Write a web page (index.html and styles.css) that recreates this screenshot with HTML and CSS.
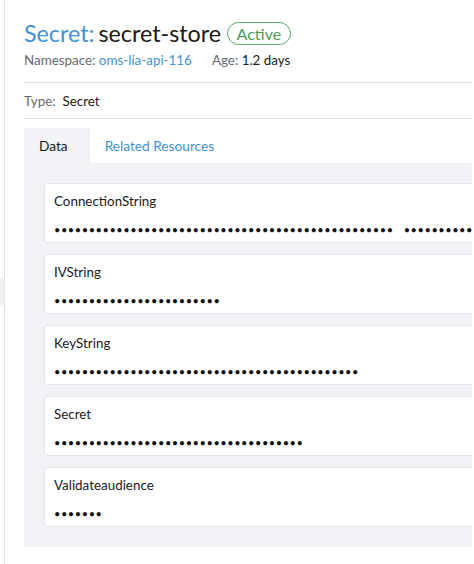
FILE: index.html
```html
<!DOCTYPE html>
<html>
<head>
<meta charset="utf-8">
<link rel="stylesheet" href="styles.css">
</head>
<body>
<div class="layout">
  <div class="rail"><div class="rail-block"></div></div>
  <div class="main">
    <div class="clip">
      <div class="title-row">
        <span class="kind">Secret:</span>
        <span class="name">secret-store</span>
        <span class="badge">Active</span>
      </div>
      <div class="meta">
        <span class="meta-item"><span class="meta-label">Namespace:</span> <span class="link">oms-lia-api-116</span></span>
        <span class="meta-item"><span class="meta-label">Age:</span> <span class="meta-value">1.2 days</span></span>
      </div>
      <div class="type-row"><span class="meta-label">Type:</span>&nbsp; <span class="meta-value">Secret</span></div>
      <div class="tabs">
        <div class="tab active">Data</div>
        <div class="tab">Related Resources</div>
      </div>
      <div class="panel">
        <div class="card">
          <div class="card-label">ConnectionString</div>
          <div class="dots">•••••••••••••••••••••••••••••••••••••••••••••••••&nbsp;&nbsp;&nbsp;•••••••••••••••••••••••••</div>
        </div>
        <div class="card">
          <div class="card-label">IVString</div>
          <div class="dots">••••••••••••••••••••••••</div>
        </div>
        <div class="card">
          <div class="card-label">KeyString</div>
          <div class="dots">••••••••••••••••••••••••••••••••••••••••••••</div>
        </div>
        <div class="card">
          <div class="card-label">Secret</div>
          <div class="dots">••••••••••••••••••••••••••••••••••••</div>
        </div>
        <div class="card">
          <div class="card-label">Validateaudience</div>
          <div class="dots">•••••••</div>
        </div>
      </div>
    </div>
  </div>
</div>
</body>
</html>
```

FILE: styles.css
```css
html, body {
  margin: 0;
  padding: 0;
  background: #ffffff;
  overflow: hidden;
}
body {
  font-family: Lato, "Open Sans", sans-serif;
  color: #1f1f1f;
}
.layout {
  display: flex;
  height: 564px;
}
.rail {
  width: 4px;
  flex: none;
}
.rail-block {
  margin-top: 278px;
  height: 27px;
  background: #eef0f3;
}
.main {
  flex: 1;
  border-left: 1px solid #e3e3e3;
  padding: 0 2px 0 19px;
  min-width: 0;
}
.clip {
  overflow: hidden;
  height: 564px;
}
.title-row {
  display: flex;
  align-items: center;
  padding-top: 18px;
  height: 30px;
  font-size: 23.3px;
  line-height: 30px;
  white-space: nowrap;
}
.kind {
  color: #3f93d3;
}
.name {
  color: #1a1a1a;
  margin-left: 4px;
}
.badge {
  margin-left: 6px;
  border: 1px solid #5ea86b;
  color: #4b9b59;
  border-radius: 12px;
  font-size: 16px;
  line-height: 21px;
  padding: 0 8.5px;
}
.meta {
  display: flex;
  gap: 20px;
  font-size: 13.4px;
  line-height: 18px;
  margin-top: 3px;
  padding-bottom: 13px;
  border-bottom: 1px solid #e3e3e3;
  white-space: nowrap;
}
.meta-label {
  color: #666a70;
}
.meta-value {
  color: #1a1a1a;
}
.link {
  color: #3f93d3;
}
.type-row {
  font-size: 13.4px;
  line-height: 18px;
  padding: 9px 0 8px;
  border-bottom: 1px solid #e3e3e3;
}
.tabs {
  display: flex;
  margin-top: 9px;
  font-size: 13.7px;
  line-height: 35px;
  white-space: nowrap;
}
.tab {
  padding: 0 15px;
  color: #3f93d3;
}
.tab.active {
  background: #f2f3f7;
  color: #1a1a1a;
  padding-right: 22px;
}
.panel {
  background: #f2f3f7;
  padding: 20px 0 20px 20px;
  display: flex;
  flex-direction: column;
  gap: 11px;
}
.card {
  background: #ffffff;
  border: 1px solid #e4e6ea;
  border-right: none;
  border-radius: 4px 0 0 4px;
  height: 58px;
  padding: 0 0 0 9px;
  width: 460px;
  white-space: nowrap;
  overflow: hidden;
}
.card-label {
  font-size: 13.4px;
  line-height: 18px;
  margin-top: 8px;
  color: #1a1a1a;
}
.dots {
  font-size: 11px;
  line-height: 18px;
  margin-top: 11px;
  letter-spacing: 0.55px;
  color: #111111;
}
```
